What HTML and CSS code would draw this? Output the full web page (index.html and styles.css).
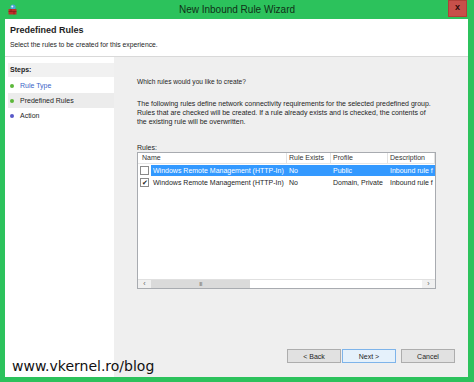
FILE: index.html
```html
<!DOCTYPE html>
<html>
  <head>
    <title>New Inbound Rule Wizard</title>
    <link rel="stylesheet" href="styles.css">
  </head>
  <body>
    <div class="window">
      <div class="titlebar">
        <svg class="app-icon" width="9" height="11" viewBox="0 0 9 11">
          <circle cx="5" cy="3" r="2.6" fill="#4aa3d8"/>
          <circle cx="4.3" cy="2.4" r="1" fill="#e6f4fb"/>
          <rect x="0.5" y="5" width="8" height="5.5" fill="#c0302a"/>
          <path d="M0.5 7.5h8M3 5v2.5M6 7.5v3" stroke="#7a1a16" stroke-width="0.6"/>
        </svg>
        <span class="title">New Inbound Rule Wizard</span>
        <span class="close">x</span>
      </div>

      <div class="client">
        <div class="header">
          <div class="header-title">Predefined Rules</div>
          <div class="header-sub">Select the rules to be created for this experience.</div>
        </div>

        <div class="body">
          <ul class="steps">
            <li class="steps-head">Steps:</li>
            <li class="step done"><span class="dot green"></span>Rule Type</li>
            <li class="step current"><span class="dot green"></span>Predefined Rules</li>
            <li class="step"><span class="dot blue"></span>Action</li>
          </ul>

          <div class="main">
            <p class="question">Which rules would you like to create?</p>
            <p class="intro">
              The following rules define network connectivity requirements for the selected predefined group.<br>
              Rules that are checked will be created. If a rule already exists and is checked, the contents of<br>
              the existing rule will be overwritten.
            </p>

            <div class="rules-label">Rules:</div>
            <div class="rules">
              <div class="rules-grid rules-head">
                <span class="cell name-head">Name</span>
                <span class="cell">Rule Exists</span>
                <span class="cell">Profile</span>
                <span class="cell">Description</span>
              </div>
              <div class="rules-grid rule selected">
                <span class="check-cell"><span class="checkbox"></span></span>
                <span class="cell">Windows Remote Management (HTTP-In)</span>
                <span class="cell">No</span>
                <span class="cell">Public</span>
                <span class="cell">Inbound rule f</span>
              </div>
              <div class="rules-grid rule">
                <span class="check-cell"><span class="checkbox checked">&#10004;</span></span>
                <span class="cell">Windows Remote Management (HTTP-In)</span>
                <span class="cell">No</span>
                <span class="cell">Domain, Private</span>
                <span class="cell">Inbound rule f</span>
              </div>
              <div class="rules-fill"></div>
              <div class="hscroll">
                <span class="arrow">&lsaquo;</span>
                <span class="thumb">III</span>
                <span class="track"></span>
                <span class="arrow">&rsaquo;</span>
              </div>
            </div>

            <div class="buttons">
              <button class="btn">&lt; Back</button>
              <button class="btn default">Next &gt;</button>
              <button class="btn cancel">Cancel</button>
            </div>
          </div>
        </div>
      </div>

      <div class="watermark">www.vkernel.ro/blog</div>
    </div>
  </body>
</html>
```

FILE: styles.css
```css
:root {
  --frame: #2cc25c;
  --panel: #efefef;
  --line: #d9d9d9;
  --text: #1e1e1e;
  --select: #3399ff;
}

body {
  margin: 0;
  width: 474px;
  height: 382px;
  overflow: hidden;
  font-family: 'Liberation Sans', Arial, sans-serif;
  color: var(--text);
}

.window {
  position: relative;
  height: 382px;
  display: flex;
  flex-direction: column;
  background: var(--frame);
}

/* Title bar */
.titlebar {
  height: 19px;
  display: grid;
  grid-template-columns: 1fr auto 1fr;
  align-items: start;
}

.app-icon {
  margin: 4px 0 0 8px;
}

.title {
  font-size: 10px;
  line-height: 19px;
  color: #103018;
}

.close {
  justify-self: end;
  width: 19px;
  height: 17px;
  margin-right: 7px;
  background: #c7504a;
  color: #2a0a08;
  font-size: 9px;
  font-weight: bold;
  line-height: 15px;
  text-align: center;
  box-shadow: inset 0 0 0 1px #b04038;
}

/* Client area */
.client {
  flex: 1;
  margin: 0 6px 5px 5px;
  display: flex;
  flex-direction: column;
  background: #fff;
}

.header {
  height: 38px;
  padding: 5px 0 0 5px;
  box-sizing: border-box;
  border-bottom: 1px solid var(--line);
}

.header-title {
  font-size: 9px;
  font-weight: bold;
  line-height: 12px;
}

.header-sub {
  margin-top: 4px;
  font-size: 6.8px;
  line-height: 9px;
}

.body {
  flex: 1;
  display: flex;
}

/* Steps */
.steps {
  width: 109px;
  margin: 0;
  padding: 6px 0 0 3px;
  box-sizing: border-box;
  list-style: none;
  font-size: 7px;
}

.steps-head {
  height: 14px;
  line-height: 14px;
  padding-left: 2px;
  margin-bottom: 1px;
  font-weight: bold;
  background: #f1f1f1;
}

.step {
  height: 15px;
  line-height: 15px;
  display: flex;
  align-items: center;
  gap: 6px;
  padding-left: 2px;
}

.step.done {
  color: #3a64c8;
}

.step.current {
  background: #ececec;
}

.dot {
  width: 4px;
  height: 4px;
  border-radius: 50%;
}

.dot.green {
  background: #5cb83a;
}

.dot.blue {
  background: #5858c8;
}

/* Main pane */
.main {
  flex: 1;
  display: flex;
  flex-direction: column;
  padding: 20px 13px 14px 23px;
  background: var(--panel);
  font-size: 7px;
}

.question,
.intro {
  margin: 0;
  line-height: 9px;
  white-space: nowrap;
}

.question {
  font-size: 6.6px;
}

.intro {
  margin-top: 13px;
  font-size: 7px;
}

.rules-label {
  margin-top: 17px;
  line-height: 9px;
}

.rules {
  width: 299px;
  height: 137px;
  box-sizing: border-box;
  display: flex;
  flex-direction: column;
  border: 1px solid #a8abb0;
  background: #fff;
  overflow: hidden;
}

.rules-grid {
  display: grid;
  grid-template-columns: 13px 136px 44px 57px 47px;
  white-space: nowrap;
}

.rules-head {
  height: 10px;
  line-height: 10px;
  color: #333;
  border-bottom: 1px solid #e6e6e6;
}

.rules-head .cell {
  padding-left: 2px;
  border-right: 1px solid #e2e2e2;
}

.rules-head .name-head {
  grid-column: span 2;
  padding-left: 4px;
}

.rule {
  height: 11px;
  line-height: 11px;
  margin-top: 1px;
}

.rule .cell {
  overflow: hidden;
  padding-left: 2px;
}

.rule.selected .cell {
  background: var(--select);
  color: #fff;
}

.check-cell {
  display: flex;
  align-items: center;
  padding-left: 2px;
}

.checkbox {
  width: 7px;
  height: 7px;
  border: 1px solid #8a8a8a;
  background: #fff;
  font-size: 7px;
  line-height: 7px;
  text-align: center;
  color: #222;
}

.rules-fill {
  flex: 1;
}

.hscroll {
  height: 8px;
  display: flex;
  background: #f0f0f0;
  border-top: 1px solid #e0e0e0;
  font-size: 7px;
  line-height: 8px;
  color: #606060;
}

.hscroll .arrow {
  width: 13px;
  text-align: center;
}

.hscroll .thumb {
  width: 99px;
  background: #dadada;
  text-align: center;
  font-size: 5px;
  letter-spacing: -0.5px;
}

.hscroll .track {
  flex: 1;
  background: #fff;
}

/* Buttons */
.buttons {
  margin-top: auto;
  display: flex;
  justify-content: flex-end;
  gap: 1px;
}

.btn {
  width: 54px;
  height: 14px;
  padding: 0;
  border: 1px solid #adadad;
  background: #e1e1e1;
  font-family: 'Liberation Sans', Arial, sans-serif;
  font-size: 7px;
  color: var(--text);
}

.btn.default {
  border-color: #7eb4ea;
  background: #e5f1fb;
}

.btn.cancel {
  margin-left: 4px;
}

/* Watermark stamped over the screenshot */
.watermark {
  position: absolute;
  left: 12px;
  bottom: 8px;
  font-family: 'DejaVu Sans', Verdana, sans-serif;
  font-size: 14px;
  line-height: 15px;
  color: #111;
}
```
